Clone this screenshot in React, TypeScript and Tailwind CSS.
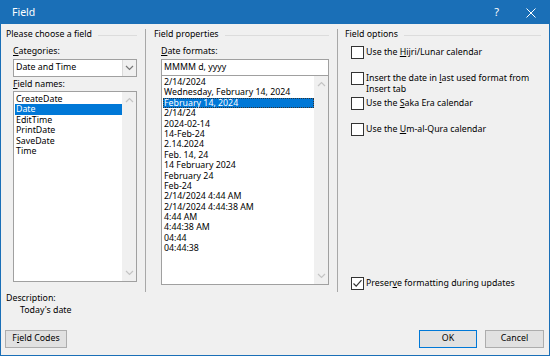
import React from "react";

const font = { fontFamily: '"Noto Sans", "Open Sans", sans-serif' };

function Chevron({ up = false, className = "" }: { up?: boolean; className?: string }) {
  return (
    <svg width="9" height="6" viewBox="0 0 9 6" className={className}>
      <path
        d={up ? "M1 5 L4.5 1.5 L8 5" : "M1 1 L4.5 4.5 L8 1"}
        fill="none"
        stroke="currentColor"
        strokeWidth="1.2"
      />
    </svg>
  );
}

function GroupHeader({ title, className = "" }: { title: string; className?: string }) {
  return (
    <div className={`flex items-center h-[12px] ${className}`}>
      <span className="whitespace-nowrap">{title}</span>
      <div className="flex-1 h-px bg-[#dcdcdc] ml-[6px]" />
    </div>
  );
}

function Label({ children }: { children: React.ReactNode }) {
  return <div className="h-[12px] flex items-center whitespace-nowrap">{children}</div>;
}

function U({ children }: { children: React.ReactNode }) {
  return <span className="underline underline-offset-[1px] decoration-1">{children}</span>;
}

function CheckBox({ checked = false }: { checked?: boolean }) {
  return (
    <div className="w-[13px] h-[13px] border border-[#333] bg-white flex items-center justify-center flex-shrink-0">
      {checked && (
        <svg width="11" height="11" viewBox="0 0 11 11">
          <path d="M1.5 5.5 L4.2 8.2 L9.5 2.2" fill="none" stroke="#333" strokeWidth="1.2" />
        </svg>
      )}
    </div>
  );
}

function Option({ children, checked }: { children: React.ReactNode; checked?: boolean }) {
  return (
    <div className="flex items-start gap-[2px]">
      <CheckBox checked={checked} />
      <div className="leading-[11px] pt-[1px] whitespace-nowrap">{children}</div>
    </div>
  );
}

function ScrollTrack() {
  return (
    <div className="w-[14px] bg-[#f0f0f0] flex flex-col items-center justify-between py-[5px] text-[#c4c4c4]">
      <Chevron up />
      <Chevron />
    </div>
  );
}

const fieldNames = ["CreateDate", "Date", "EditTime", "PrintDate", "SaveDate", "Time"];

const dateFormats = [
  "2/14/2024",
  "Wednesday, February 14, 2024",
  "February 14, 2024",
  "2/14/24",
  "2024-02-14",
  "14-Feb-24",
  "2.14.2024",
  "Feb. 14, 24",
  "14 February 2024",
  "February 24",
  "Feb-24",
  "2/14/2024 4:44 AM",
  "2/14/2024 4:44:38 AM",
  "4:44 AM",
  "4:44:38 AM",
  "04:44",
  "04:44:38",
];

export default function App() {
  return (
    <div
      style={font}
      className="w-[550px] h-[356px] border border-[#1a6fb7] bg-[#f0f0f0] flex flex-col text-[8.8px] text-black overflow-hidden"
    >
      {/* Title bar */}
      <div className="h-[23px] bg-[#1a6fb7] flex items-center text-white flex-shrink-0">
        <span className="pl-[11px] text-[10.5px]">Field</span>
        <div className="flex-1" />
        <span className="text-[11px] mr-[27px]">?</span>
        <svg width="10" height="10" viewBox="0 0 10 10" className="mr-[13px]">
          <path d="M0.5 0.5 L9.5 9.5 M9.5 0.5 L0.5 9.5" stroke="white" strokeWidth="1" />
        </svg>
      </div>

      {/* Main groups */}
      <div className="flex h-[268px] pt-[5px] flex-shrink-0">
        {/* Left */}
        <div className="w-[144px] flex flex-col pl-[5px] pr-[8px]">
          <GroupHeader title="Please choose a field" />
          <div className="pl-[7px] flex flex-col">
            <div className="mt-[5px]">
              <Label>
                <U>C</U>ategories:
              </Label>
            </div>
            <div className="mt-[1px] h-[18px] border border-[#a0a0a0] bg-white flex">
              <div className="flex-1 flex items-center pl-[2px]">Date and Time</div>
              <div className="w-[14px] bg-[#f0f0f0] border-l border-[#dadada] flex items-center justify-center text-[#777]">
                <Chevron />
              </div>
            </div>
            <div className="mt-[2px]">
              <Label>
                <U>F</U>ield names:
              </Label>
            </div>
            <div className="h-[191px] border border-[#a0a0a0] bg-white flex">
              <div className="flex-1 pt-[2px] pl-[1px] leading-[10.4px]">
                {fieldNames.map((n) => (
                  <div
                    key={n}
                    className={`h-[10.4px] pl-[1px] whitespace-nowrap ${n === "Date" ? "bg-[#0078d7] text-white" : ""}`}
                  >
                    {n}
                  </div>
                ))}
              </div>
              <ScrollTrack />
            </div>
          </div>
        </div>

        <div className="w-px bg-[#a8a8a8]" />

        {/* Middle */}
        <div className="w-[191px] flex flex-col pl-[8px] pr-[8px]">
          <GroupHeader title="Field properties" />
          <div className="pl-[7px] flex flex-col">
            <div className="mt-[5px]">
              <Label>
                <U>D</U>ate formats:
              </Label>
            </div>
            <div className="mt-[1px] h-[17px] border border-[#a0a0a0] bg-white flex items-center pl-[2px]">
              MMMM d, yyyy
            </div>
            <div className="h-[209px] border border-t-0 border-[#a0a0a0] bg-white flex">
              <div className="flex-1 pt-[1px] pl-[1px] leading-[10.4px]">
                {dateFormats.map((d) => (
                  <div
                    key={d}
                    className={`h-[10.4px] pl-[1px] whitespace-nowrap ${
                      d === "February 14, 2024"
                        ? "bg-[#0078d7] text-white outline outline-1 outline-dotted outline-[#333] -outline-offset-1"
                        : ""
                    }`}
                  >
                    {d}
                  </div>
                ))}
              </div>
              <ScrollTrack />
            </div>
          </div>
        </div>

        <div className="w-px bg-[#a8a8a8]" />

        {/* Right */}
        <div className="flex-1 flex flex-col pl-[7px] pr-[8px]">
          <GroupHeader title="Field options" />
          <div className="pl-[6px] flex flex-col flex-1">
            <div className="mt-[5px]">
              <Option>
                Use the <U>H</U>ijri/Lunar calendar
              </Option>
            </div>
            <div className="mt-[13px]">
              <Option>
                Insert the date in <U>l</U>ast used format from
                <br />
                Insert tab
              </Option>
            </div>
            <div className="mt-[2px]">
              <Option>
                Use the <U>S</U>aka Era calendar
              </Option>
            </div>
            <div className="mt-[13px]">
              <Option>
                Use the <U>U</U>m-al-Qura calendar
              </Option>
            </div>
            <div className="mt-auto mb-[2px]">
              <Option checked>
                Preser<U>v</U>e formatting during updates
              </Option>
            </div>
          </div>
        </div>
      </div>

      {/* Description */}
      <div className="pl-[5px] mt-[1px]">
        <Label>Description:</Label>
        <div className="pl-[14px]">
          <Label>Today's date</Label>
        </div>
      </div>

      {/* Buttons */}
      <div className="flex mt-[13px] pl-[4px] pr-[5px]">
        <button className="w-[62px] h-[18px] border border-[#adadad] bg-[#e1e1e1] flex items-center justify-center">
          F<U>i</U>eld Codes
        </button>
        <div className="flex-1" />
        <button className="w-[58px] h-[18px] border border-[#0078d7] bg-[#e1e1e1] flex items-center justify-center">
          OK
        </button>
        <button className="w-[59px] h-[18px] ml-[8px] border border-[#adadad] bg-[#e1e1e1] flex items-center justify-center">
          Cancel
        </button>
      </div>
    </div>
  );
}
